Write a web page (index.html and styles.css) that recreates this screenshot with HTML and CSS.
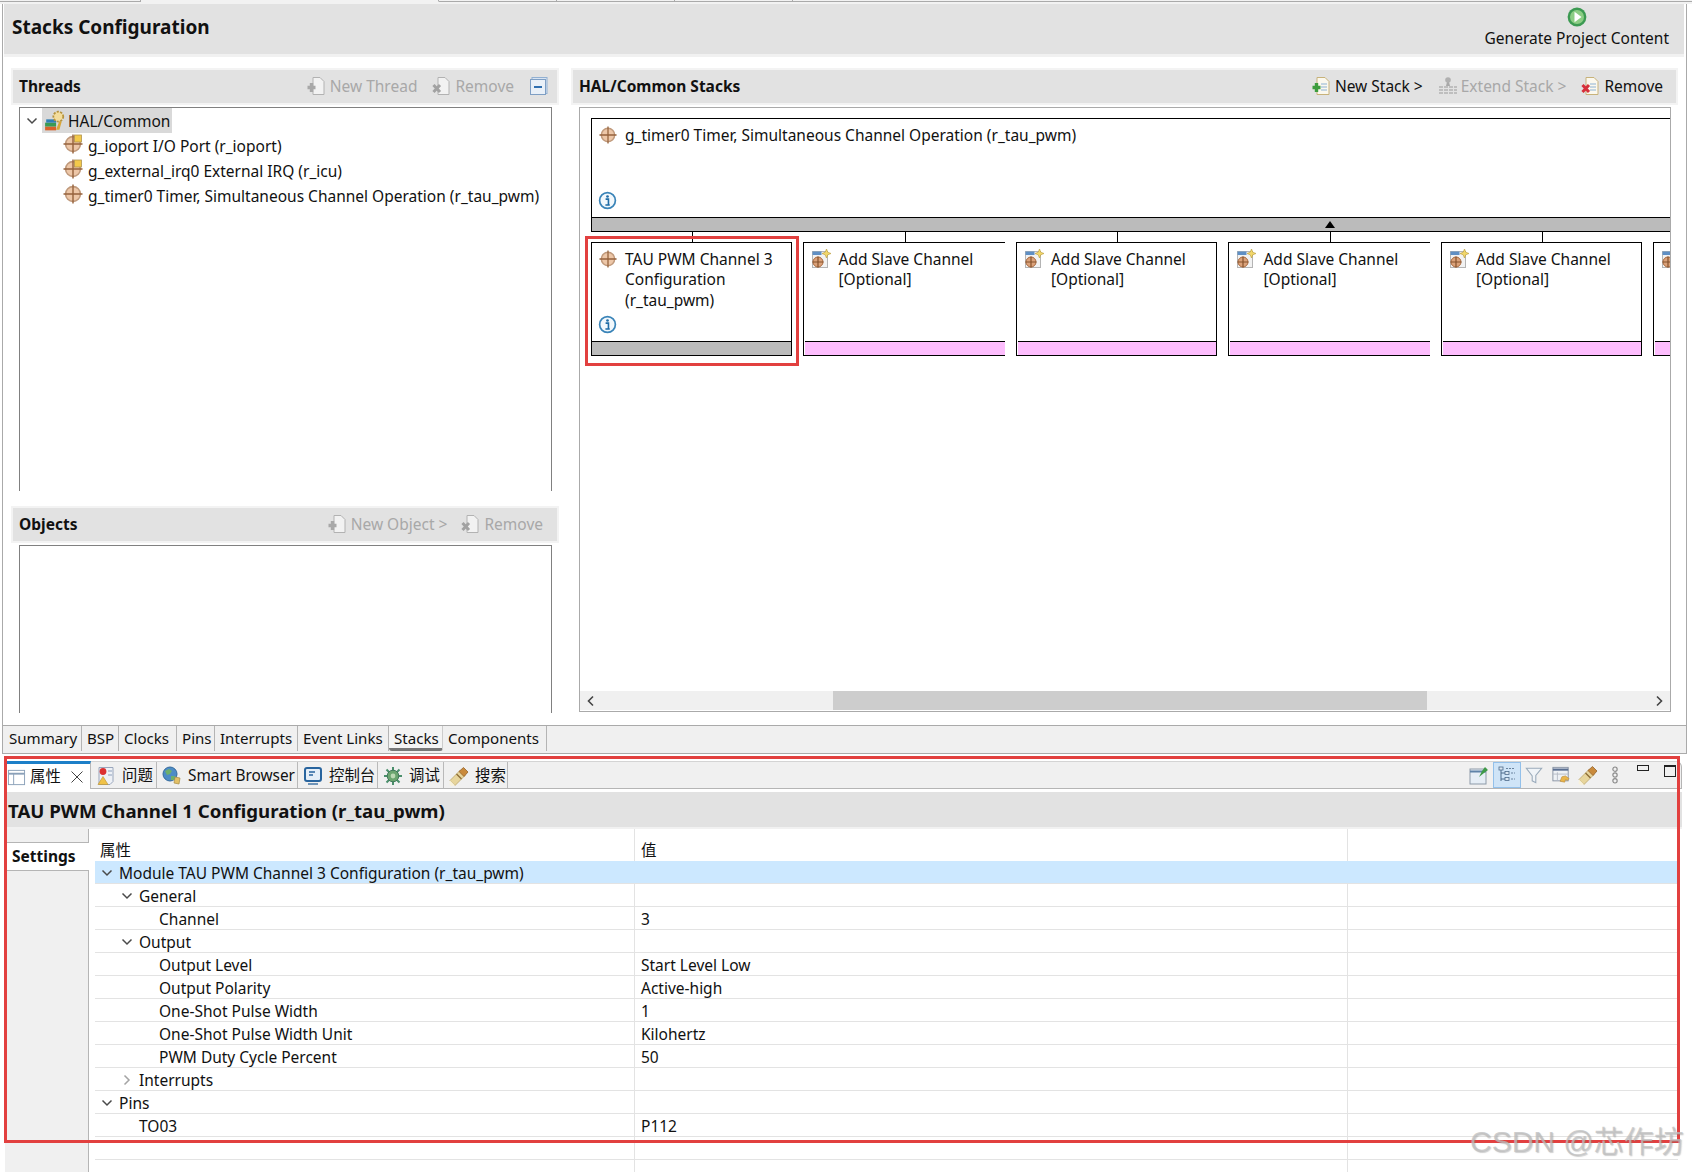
FILE: index.html
```html
<!DOCTYPE html>
<html lang="en">
<head>
<meta charset="utf-8">
<title>Stacks Configuration</title>
<link rel="stylesheet" href="styles.css">
</head>
<body>
<svg class="defs" aria-hidden="true">
  <symbol id="cross" viewBox="0 0 20 20">
    <circle cx="10" cy="10" r="7.4" fill="#edc7a8" stroke="#c09a7c" stroke-width="1.600"/>
    <path d="M10 0.500v19M0.500 10h19" stroke="#95623c" stroke-width="1.400"/>
  </symbol>
  <symbol id="crossy" viewBox="0 0 20 20">
    <use href="#cross"/>
    <rect x="11.500" y="1" width="7" height="7" fill="#f3c94a" stroke="#b09450" stroke-width=".8"/>
  </symbol>
  <symbol id="hal" viewBox="0 0 20 20">
    <rect x="1" y="15" width="10" height="3.500" fill="#d8622a"/>
    <rect x="1" y="11.500" width="10" height="3.500" fill="#3a9a54"/>
    <rect x="2" y="8.500" width="9" height="3" fill="#2f7fb5"/>
    <circle cx="13" cy="6" r="4.500" fill="#f3dd9c" stroke="#b5933e" stroke-width="1.600" stroke-dasharray="2 1.200"/>
    <path d="M11 18l3-8 2 1-2 7z" fill="#d9a638"/>
  </symbol>
  <symbol id="doc" viewBox="0 0 20 20">
    <path d="M5 1.500h8l4 4v13H5z" fill="#fbf8ee" stroke="#c7b27a"/>
    <path d="M9 8h6M9 11h6M9 14h6" stroke="#8db2d4"/>
  </symbol>
  <symbol id="doc-add" viewBox="0 0 20 20">
    <use href="#doc"/>
    <path d="M4.500 7v9M0.500 11.500h8" stroke="#3d9c3d" stroke-width="3.400"/>
  </symbol>
  <symbol id="doc-del" viewBox="0 0 20 20">
    <use href="#doc"/>
    <path d="M1.500 9l6.500 7M8 9l-6.500 7" stroke="#d6303a" stroke-width="3"/>
  </symbol>
  <symbol id="off-add" viewBox="0 0 20 20">
    <path d="M6 1.500h7l4 4v13H6z" fill="#f2f2f2" stroke="#b2b2b2"/>
    <path d="M4.500 7v9M0.500 11.500h8" stroke="#a8a8a8" stroke-width="3.400"/>
  </symbol>
  <symbol id="off-del" viewBox="0 0 20 20">
    <path d="M6 1.500h7l4 4v13H6z" fill="#f2f2f2" stroke="#b2b2b2"/>
    <path d="M1.500 9l6.500 7M8 9l-6.500 7" stroke="#a2a2a2" stroke-width="3"/>
  </symbol>
  <symbol id="collapse" viewBox="0 0 20 20">
    <rect x="3" y="1.500" width="15" height="16" fill="#d8e4f2" stroke="#92b0d2"/>
    <rect x="1.500" y="3.500" width="15" height="15" fill="#e9f0f8" stroke="#7f9fc4"/>
    <path d="M5 11h8" stroke="#2f6fb0" stroke-width="2"/>
  </symbol>
  <symbol id="info" viewBox="0 0 20 20">
    <circle cx="10" cy="10" r="8.300" fill="#f2f8fc" stroke="#3a84b8" stroke-width="1.800"/>
    <circle cx="10" cy="5.800" r="1.400" fill="#1f6ca6"/>
    <path d="M8 8.600h3v6M7.800 14.800h4.600" fill="none" stroke="#1f6ca6" stroke-width="1.700"/>
  </symbol>
  <symbol id="gen" viewBox="0 0 20 20">
    <circle cx="10" cy="10" r="9.400" fill="#3c9a52"/>
    <circle cx="10" cy="10" r="7" fill="#8ccd84"/>
    <path d="M7.500 4.800l7 5.200-7 5.200z" fill="#fff"/>
  </symbol>
  <symbol id="extend" viewBox="0 0 20 20">
    <path d="M1 11h18M1 14h18M1 17h18" stroke="#b3b3b3" stroke-width="1.300" stroke-dasharray="4 1"/>
    <path d="M8 10l1-4h2l1 4z" fill="#a8a8a8"/>
    <circle cx="10" cy="4" r="2.800" fill="#b0b0b0"/>
  </symbol>
  <symbol id="slave" viewBox="0 0 20 20">
    <rect x="1.500" y="2.500" width="15" height="16" fill="#f2f2f2" stroke="#b4b4b4"/>
    <rect x="1.500" y="2.500" width="9" height="3.500" fill="#5f8fc4"/>
    <circle cx="7" cy="13" r="5" fill="#dba27a" stroke="#a8683c"/>
    <path d="M7 7.500v11M1.500 13h11" stroke="#85522c" stroke-width="1.200"/>
    <path d="M15.500 0l1.300 3.200L20 4.500l-3.200 1.300L15.500 9l-1.300-3.200L11 4.500l3.200-1.300z" fill="#f2d76a" stroke="#b99b38" stroke-width=".6"/>
  </symbol>
  <symbol id="t-prop" viewBox="0 0 20 20">
    <rect x="1.500" y="2.500" width="17" height="15" fill="#fff" stroke="#8aa0b8"/>
    <path d="M1.500 6h17" stroke="#8aa0b8" stroke-width="2"/>
    <path d="M7 6v11.500" stroke="#8aa0b8"/>
  </symbol>
  <symbol id="t-prob" viewBox="0 0 20 20">
    <path d="M3 1.500h14v14l-3 3H3z" fill="#eef1f6" stroke="#9aa6bc"/>
    <circle cx="7" cy="5.500" r="3.400" fill="#dc3030"/>
    <path d="M7 10.500l5 8H2z" fill="#f0c248" stroke="#b99030" stroke-width=".6"/>
    <path d="M12 5h4M12 9h4" stroke="#8ea0bc"/>
  </symbol>
  <symbol id="t-globe" viewBox="0 0 20 20">
    <circle cx="8" cy="8" r="7" fill="#4d8cc6" stroke="#336a9c"/>
    <path d="M3 5l4-2 3 2-2 3-3 1zM9 10l4 0-1 4-3 0z" fill="#6fb06a"/>
    <path d="M13 11l5 1-1 6-5-1z" fill="#e3c067" stroke="#a68b42" stroke-width=".7"/>
  </symbol>
  <symbol id="t-mon" viewBox="0 0 20 20">
    <rect x="2" y="2" width="16" height="13" rx="2" fill="#e4eef8" stroke="#28649e" stroke-width="2"/>
    <path d="M6 6h6M6 9h4" stroke="#28649e" stroke-width="1.300"/>
    <path d="M5 18h10" stroke="#6f94b8" stroke-width="2"/>
  </symbol>
  <symbol id="t-bug" viewBox="0 0 20 20">
    <path d="M10 1v18M1 10h18M3.500 3.500l13 13M16.500 3.500l-13 13" stroke="#4b8f6c" stroke-width="2"/>
    <circle cx="10" cy="10" r="5.800" fill="#6ba56f" stroke="#41795a"/>
    <circle cx="10" cy="10" r="2.400" fill="#bcd9b4"/>
  </symbol>
  <symbol id="t-torch" viewBox="0 0 20 20">
    <path d="M1 14.500L11 4.500l5 5L6 19.500z" fill="#e7d59c" stroke="#bba567" stroke-width=".8"/>
    <path d="M10 5.500l5 5 4-4.500-4.500-4.500z" fill="#c98a3c" stroke="#94622a" stroke-width=".8"/>
    <path d="M1 14.500l5 5-4 .5-1.500-1.500z" fill="#f8f2dc"/>
    <path d="M7.500 8l5 5" stroke="#8a6a34" stroke-width="1.300"/>
  </symbol>
  <symbol id="t-x" viewBox="0 0 14 14"><path d="M1.500 1.500l11 11M12.500 1.500l-11 11" stroke="#444" stroke-width="1" fill="none"/></symbol>
  <symbol id="b-pin" viewBox="0 0 20 20">
    <rect x="1" y="4" width="16" height="15" fill="#e6eef6" stroke="#8d9aa8"/>
    <path d="M1 6.500h16" stroke="#5f83a8" stroke-width="2"/>
    <path d="M10 12l3-6 3-4 3 3-4 3-5 4z" fill="#3f9a48"/>
  </symbol>
  <symbol id="b-tree" viewBox="0 0 20 20">
    <path d="M4 3v13M4 8h4M4 14h4" stroke="#4d6a8a" fill="none"/>
    <rect x="2" y="2" width="4" height="3" fill="#dbe7f2" stroke="#4d6a8a" stroke-width=".8"/>
    <rect x="8" y="6.500" width="4" height="3" fill="#dbe7f2" stroke="#4d6a8a" stroke-width=".8"/>
    <rect x="8" y="12.500" width="4" height="3" fill="#dbe7f2" stroke="#4d6a8a" stroke-width=".8"/>
    <path d="M9 3.500h9M14 8h4M14 14h4" stroke="#68829e" stroke-dasharray="2 1"/>
  </symbol>
  <symbol id="b-filter" viewBox="0 0 20 20">
    <path d="M1.500 2.500h17L12 10.500v8l-4-2v-5.500z" fill="#f0f4f8" stroke="#9aabbb" stroke-width="1.200"/>
  </symbol>
  <symbol id="b-win" viewBox="0 0 20 20">
    <rect x="1" y="1.500" width="17" height="15" fill="#eef1f5" stroke="#8590a0"/>
    <path d="M1 4h17" stroke="#5a6e90" stroke-width="2.400"/>
    <path d="M6 7v9M1 9h17" stroke="#b3bac4"/>
    <path d="M9 17l2-5 4-1 4 3-2 2-2-1-1 3z" fill="#eab54a" stroke="#b2822c" stroke-width=".6"/>
  </symbol>
  <symbol id="b-dots" viewBox="0 0 8 20">
    <circle cx="4" cy="3.500" r="2.400" fill="none" stroke="#8b8b8b" stroke-width="1.300"/>
    <circle cx="4" cy="10" r="2.400" fill="none" stroke="#8b8b8b" stroke-width="1.300"/>
    <circle cx="4" cy="16.500" r="2.400" fill="none" stroke="#8b8b8b" stroke-width="1.300"/>
  </symbol>
  <symbol id="down" viewBox="0 0 12 12"><path d="M1.500 3.500L6 8l4.500-4.500" fill="none" stroke="#4a4a4a" stroke-width="1.500"/></symbol>
  <symbol id="right" viewBox="0 0 12 12"><path d="M3.500 1.500L8 6l-4.500 4.500" fill="none" stroke="#a4a4a4" stroke-width="1.500"/></symbol>
  <symbol id="sb-l" viewBox="0 0 12 12"><path d="M8 1.500L3.500 6 8 10.500" fill="none" stroke="#444" stroke-width="1.600"/></symbol>
  <symbol id="sb-r" viewBox="0 0 12 12"><path d="M4 1.500L8.500 6 4 10.500" fill="none" stroke="#444" stroke-width="1.600"/></symbol>
</svg>

<div class="strip">
  <span class="strip-seg strip-a"></span>
  <span class="strip-seg strip-active"></span>
  <span class="strip-seg strip-b"></span>
  <span class="strip-seg strip-b"></span>
  <span class="strip-seg strip-b"></span>
  <span class="strip-seg strip-rest"></span>
</div>

<section class="editor">
  <header class="band">
    <h1 class="band-title">Stacks Configuration</h1>
    <div class="gen">
      <svg class="ic-gen"><use href="#gen"/></svg>
      <span>Generate Project Content</span>
    </div>
  </header>

  <div class="main">
    <div class="left">
      <div class="pane-head">
        <h2 class="pane-title">Threads</h2>
        <div class="tools tools-threads">
          <span class="tool off"><svg class="ic"><use href="#off-add"/></svg>New Thread</span>
          <span class="tool off"><svg class="ic"><use href="#off-del"/></svg>Remove</span>
          <svg class="ic"><use href="#collapse"/></svg>
        </div>
      </div>
      <div class="tree">
        <div class="tree-row tree-root">
          <svg class="chev-root"><use href="#down"/></svg>
          <span class="tree-sel"><svg class="ic-hal"><use href="#hal"/></svg>HAL/Common</span>
        </div>
        <div class="tree-row tree-leaf"><svg class="ic-tree"><use href="#crossy"/></svg>g_ioport I/O Port (r_ioport)</div>
        <div class="tree-row tree-leaf"><svg class="ic-tree"><use href="#crossy"/></svg>g_external_irq0 External IRQ (r_icu)</div>
        <div class="tree-row tree-leaf"><svg class="ic-tree"><use href="#cross"/></svg>g_timer0 Timer, Simultaneous Channel Operation (r_tau_pwm)</div>
      </div>
      <div class="pane-head pane-objects">
        <h2 class="pane-title">Objects</h2>
        <div class="tools tools-objects">
          <span class="tool off"><svg class="ic"><use href="#off-add"/></svg>New Object &gt;</span>
          <span class="tool off"><svg class="ic"><use href="#off-del"/></svg>Remove</span>
        </div>
      </div>
      <div class="objects-box"></div>
    </div>

    <div class="right">
      <div class="pane-head">
        <h2 class="pane-title pane-title-r">HAL/Common Stacks</h2>
        <div class="tools tools-stacks">
          <span class="tool"><svg class="ic"><use href="#doc-add"/></svg>New Stack &gt;</span>
          <span class="tool off"><svg class="ic"><use href="#extend"/></svg>Extend Stack &gt;</span>
          <span class="tool"><svg class="ic"><use href="#doc-del"/></svg>Remove</span>
        </div>
      </div>
      <div class="diagram">
        <div class="canvas">
          <div class="top-card">
            <div class="top-body">
              <div class="card-line"><svg class="ic-card"><use href="#cross"/></svg><span>g_timer0 Timer, Simultaneous Channel Operation (r_tau_pwm)</span></div>
              <svg class="ic-info"><use href="#info"/></svg>
            </div>
            <div class="top-bar"><span class="tri"></span></div>
          </div>
          <div class="cards">
            <div class="card">
              <div class="card-body">
                <div class="card-line"><svg class="ic-card"><use href="#cross"/></svg><span>TAU PWM Channel 3<br>Configuration<br>(r_tau_pwm)</span></div>
                <svg class="ic-info ic-info-s"><use href="#info"/></svg>
              </div>
              <div class="card-bar"></div>
            </div>
            <div class="card card-add card-open">
              <div class="card-body"><div class="card-line"><svg class="ic-card"><use href="#slave"/></svg><span>Add Slave Channel<br>[Optional]</span></div></div>
              <div class="card-bar"></div>
            </div>
            <div class="card card-add">
              <div class="card-body"><div class="card-line"><svg class="ic-card"><use href="#slave"/></svg><span>Add Slave Channel<br>[Optional]</span></div></div>
              <div class="card-bar"></div>
            </div>
            <div class="card card-add card-open">
              <div class="card-body"><div class="card-line"><svg class="ic-card"><use href="#slave"/></svg><span>Add Slave Channel<br>[Optional]</span></div></div>
              <div class="card-bar"></div>
            </div>
            <div class="card card-add">
              <div class="card-body"><div class="card-line"><svg class="ic-card"><use href="#slave"/></svg><span>Add Slave Channel<br>[Optional]</span></div></div>
              <div class="card-bar"></div>
            </div>
            <div class="card card-add card-cut">
              <div class="card-body"><div class="card-line"><svg class="ic-card"><use href="#slave"/></svg></div></div>
              <div class="card-bar"></div>
            </div>
          </div>
        </div>
        <div class="hscroll">
          <svg class="sb-arrow"><use href="#sb-l"/></svg>
          <div class="sb-track"><div class="sb-thumb"></div></div>
          <svg class="sb-arrow"><use href="#sb-r"/></svg>
        </div>
      </div>
    </div>
  </div>

  <nav class="editor-tabs">
    <span class="etab">Summary</span>
    <span class="etab">BSP</span>
    <span class="etab">Clocks</span>
    <span class="etab">Pins</span>
    <span class="etab">Interrupts</span>
    <span class="etab">Event Links</span>
    <span class="etab etab-on">Stacks</span>
    <span class="etab">Components</span>
  </nav>
</section>

<section class="panel">
  <div class="panel-tabs">
    <span class="ptab ptab-on"><svg class="ic-tab ic-tab-prop"><use href="#t-prop"/></svg>属性<svg class="ptab-x"><use href="#t-x"/></svg></span>
    <span class="ptab"><svg class="ic-tab"><use href="#t-prob"/></svg>问题</span>
    <span class="ptab"><svg class="ic-tab"><use href="#t-globe"/></svg>Smart Browser</span>
    <span class="ptab"><svg class="ic-tab"><use href="#t-mon"/></svg>控制台</span>
    <span class="ptab"><svg class="ic-tab"><use href="#t-bug"/></svg>调试</span>
    <span class="ptab"><svg class="ic-tab"><use href="#t-torch"/></svg>搜索</span>
    <div class="panel-tools">
      <svg class="ic-b"><use href="#b-pin"/></svg>
      <span class="b-on"><svg class="ic-b"><use href="#b-tree"/></svg></span>
      <svg class="ic-b ic-filter"><use href="#b-filter"/></svg>
      <svg class="ic-b ic-win"><use href="#b-win"/></svg>
      <svg class="ic-b ic-torch"><use href="#t-torch"/></svg>
      <svg class="ic-dots"><use href="#b-dots"/></svg>
      <span class="win-min"></span>
      <span class="win-max"></span>
    </div>
  </div>
  <div class="panel-band">TAU PWM Channel 1 Configuration (r_tau_pwm)</div>
  <div class="panel-body">
    <aside class="side">
      <div class="side-top"></div>
      <div class="side-tab">Settings</div>
    </aside>
    <div class="table">
      <div class="row row-head"><span class="c1">属性</span><span class="c2">值</span><span class="c3"></span></div>
      <div class="row row-sel"><span class="c1 l1"><svg class="chev"><use href="#down"/></svg>Module TAU PWM Channel 3 Configuration (r_tau_pwm)</span><span class="c2"></span><span class="c3"></span></div>
      <div class="row"><span class="c1 l2"><svg class="chev"><use href="#down"/></svg>General</span><span class="c2"></span><span class="c3"></span></div>
      <div class="row"><span class="c1 l3">Channel</span><span class="c2">3</span><span class="c3"></span></div>
      <div class="row"><span class="c1 l2"><svg class="chev"><use href="#down"/></svg>Output</span><span class="c2"></span><span class="c3"></span></div>
      <div class="row"><span class="c1 l3">Output Level</span><span class="c2">Start Level Low</span><span class="c3"></span></div>
      <div class="row"><span class="c1 l3">Output Polarity</span><span class="c2">Active-high</span><span class="c3"></span></div>
      <div class="row"><span class="c1 l3">One-Shot Pulse Width</span><span class="c2">1</span><span class="c3"></span></div>
      <div class="row"><span class="c1 l3">One-Shot Pulse Width Unit</span><span class="c2">Kilohertz</span><span class="c3"></span></div>
      <div class="row"><span class="c1 l3">PWM Duty Cycle Percent</span><span class="c2">50</span><span class="c3"></span></div>
      <div class="row"><span class="c1 l2"><svg class="chev"><use href="#right"/></svg>Interrupts</span><span class="c2"></span><span class="c3"></span></div>
      <div class="row"><span class="c1 l1"><svg class="chev"><use href="#down"/></svg>Pins</span><span class="c2"></span><span class="c3"></span></div>
      <div class="row"><span class="c1 l4">TO03</span><span class="c2">P112</span><span class="c3"></span></div>
      <div class="row"><span class="c1"></span><span class="c2"></span><span class="c3"></span></div>
      <div class="row"><span class="c1"></span><span class="c2"></span><span class="c3"></span></div>
    </div>
  </div>
</section>

<div class="mark mark-card"></div>
<div class="mark mark-panel"></div>
<div class="watermark">CSDN @芯作坊</div>
</body>
</html>
```
FILE: styles.css
```css
* { box-sizing: border-box; }
html, body { margin: 0; padding: 0; }
body {
  width: 1692px; height: 1172px; overflow: hidden; position: relative;
  background: #fff; color: #111;
  font: 15.5px/20px "Noto Sans", "Noto Sans CJK SC", sans-serif;
}
.defs { display: block; width: 0; height: 0; position: absolute; }
svg { display: block; flex: none; }
h1, h2 { margin: 0; }

/* top strip */
.strip { display: flex; height: 4px; background: #f2f2f2; }
.strip-seg { display: block; height: 2px; border-bottom: 1px solid #aaa; border-right: 1px solid #aaa; }
.strip-a { width: 141px; }
.strip-active { width: 298px; border-bottom-color: #f2f2f2; }
.strip-b { width: 118px; }
.strip-rest { flex: 1; border-right: 0; }

/* editor */
.editor {
  margin-left: 2px; width: 1685px; height: 750px;
  border-left: 1px solid #aaa; border-right: 1px solid #aaa; border-bottom: 1px solid #aaa;
  display: flex; flex-direction: column;
}
.band {
  margin: 0 2px 0 1px; height: 53px; flex: none; background: #e2e2e2;
  border-bottom: 3px solid #f1f1f1;
  display: flex; justify-content: space-between; padding: 0 15px 0 8px;
}
.band-title { font-size: 19px; font-weight: 700; line-height: 46px; }
.gen { display: flex; flex-direction: column; align-items: center; padding-top: 3px; }
.ic-gen { width: 20px; height: 20px; margin-bottom: 1px; }

.main { display: flex; flex: 1; min-height: 0; padding-left: 10px; gap: 16px; }
.left { width: 544px; flex: none; padding-top: 13px; }
.right { width: 1103px; flex: none; padding-top: 13px; }

.pane-head {
  height: 33px; background: #e2e2e2; box-shadow: 0 0 0 2px #f3f3f3;
  display: flex; justify-content: space-between; align-items: center; padding-bottom: 2px;
}
.pane-title { font-size: 15.5px; font-weight: 700; padding-left: 6px; }
.pane-objects { margin-top: 17px; }
.tools { display: flex; align-items: center; }
.tool { display: flex; align-items: center; gap: 3px; }
.off { color: #a8a8a8; }
.ic { width: 20px; height: 20px; }
.tools-threads { gap: 15px; padding-right: 8px; }
.tools-objects { gap: 14px; padding-right: 14px; }
.tools-stacks { gap: 15px; padding-right: 13px; }

.tree {
  margin: 4px 5px 0 6px; height: 384px;
  border: 1px solid #808080; border-bottom: 0;
}
.tree-row { height: 25px; display: flex; align-items: center; }
.tree-root { padding-left: 6px; }
.chev-root { width: 12px; height: 12px; margin-right: 4px; }
.tree-sel { display: flex; align-items: center; height: 25px; background: #d9d9d9; padding-right: 2px; padding-left: 2px; }
.ic-hal { width: 22px; height: 22px; margin-right: 2px; }
.tree-leaf { padding: 0 0 0 43px; }
.ic-tree { width: 20px; height: 20px; margin-right: 5px; margin-top: -3px; }

.objects-box {
  margin: 4px 5px 0 6px; height: 168px;
  border: 1px solid #808080; border-bottom: 0;
}

/* diagram */
.diagram {
  margin: 4px 5px 0 6px; height: 605px; border: 1px solid #aaa;
  display: flex; flex-direction: column;
}
.canvas { flex: 1; min-height: 0; padding: 10px 0 0 11px; overflow: hidden; }
.top-card {
  height: 114px; border: 1px solid #000; border-right: 0;
  display: flex; flex-direction: column;
}
.top-body { flex: 1; padding: 7px 0 0 7px; display: flex; flex-direction: column; justify-content: space-between; }
.card-line { display: flex; gap: 8px; line-height: 20.4px; }
.card-line span { margin-top: -1px; }
.ic-card { width: 18px; height: 18px; margin-top: 0; }
.ic-info { width: 19px; height: 19px; margin: 0 0 7px -1px; }
.ic-info-s { margin-bottom: 7px; }
.top-bar {
  height: 14px; background: #bbb; border-top: 1px solid #000;
  padding: 3px 0 0 733px;
}
.tri {
  display: block; width: 0; height: 0;
  border-left: 5px solid transparent; border-right: 5px solid transparent;
  border-bottom: 7px solid #000;
}
.cards { display: flex; gap: 11.2px; margin-top: 10px; }
.card {
  position: relative; flex: none; width: 201.3px; height: 114px;
  border: 1px solid #000; display: flex; flex-direction: column;
}
.card::before {
  content: ""; position: absolute; left: 50%; top: -11px; width: 1px; height: 11px; background: #000;
}
.card-body { flex: 1; padding: 7px 0 0 7px; display: flex; flex-direction: column; justify-content: space-between; }
.card-add .ic-card { width: 20px; height: 20px; margin-top: -1px; }
.card-add .card-line { gap: 7px; }
.card-bar { height: 14px; background: #bbb; border-top: 1px solid #000; }
.card-add .card-bar { background: #fdbdfd; margin-left: 1px; }
.card-open { border-right: 0; }
.card-cut { width: 17px; border-right: 0; overflow: hidden; }
.card-cut::before { display: none; }

.hscroll { height: 19px; margin-bottom: 1px; background: #f0f0f0; display: flex; align-items: center; flex: none; }
.sb-arrow { width: 12px; height: 12px; margin: 0 5px; }
.sb-track { flex: 1; height: 19px; padding-left: 231px; }
.sb-thumb { width: 594px; height: 19px; background: #cdcdcd; }

/* editor tabs */
.editor-tabs {
  margin: auto 0 0 0; height: 28px; background: #f0f0f0; border-top: 1px solid #aaa; flex: none; font-size: 15.1px;
  display: grid; grid-template-columns: 78px 37px 58px 38px 83px 91px 54px 104px; padding-left: 1px;
}
.etab { border-right: 1px solid #b4b4b4; padding-left: 5px; height: 25px; line-height: 24px; white-space: nowrap; }
.etab-on { background: #f4f4f4; border-bottom: 3px solid #777; border-radius: 0 0 3px 3px; border-right-color: #ccc; }

/* lower panel */
.panel { padding: 7px 8px 0 4px; height: 418px; display: flex; flex-direction: column; }
.panel-tabs {
  height: 28px; flex: none; display: grid;
  grid-template-columns: 87px 66px 141px 80px 66px 64px 1fr;
  background: #f0f0f0; border-bottom: 1px solid #b5b5b5; border-top: 1px solid #d4d4d4;
  border-right: 1px solid #b5b5b5; border-radius: 0 6px 0 0; margin-right: 2px;
}
.ptab {
  display: flex; align-items: center; gap: 6px; padding: 1px 0 0 5px;
  border-right: 1px solid #b9b9b9; white-space: nowrap; font-size: 15.4px;
}
.ptab-on { background: #fff; border-top: 3px solid #1c7fc8; margin-top: -1px; margin-bottom: -1px; gap: 4px; padding-left: 3px; }
.ptab-x { width: 14px; height: 14px; margin-left: 5px; }
.ic-tab { width: 20px; height: 20px; }
.ic-tab-prop { width: 19px; height: 19px; }
.panel-tools { display: flex; align-items: center; justify-content: flex-end; padding-right: 5px; }
.ic-b { width: 20px; height: 20px; }
.b-on { display: block; background: #cfe4f7; border: 1px solid #93c0ea; padding: 2px 3px; height: 26px; margin-left: 4px; }
.ic-filter { width: 18px; margin-left: 4px; }
.ic-win { width: 18px; margin-left: 9px; }
.ic-torch { margin-left: 8px; }
.ic-dots { width: 8px; height: 18px; margin-left: 13px; }
.win-min { width: 12px; height: 6px; border: 1.500px solid #222; margin: -14px 0 0 18px; }
.win-max { width: 12px; height: 12px; border: 1.500px solid #222; border-top-width: 2.500px; margin: -8px 0 0 15px; }

.panel-band {
  height: 37px; flex: none; margin-top: 3px; margin-right: 2px; background: #e2e2e2;
  border-bottom: 2px solid #f1f1f1; font-size: 18.65px; font-weight: 700; line-height: 37px; padding-left: 4px;
}
.panel-body { flex: 1; min-height: 0; display: flex; }
.side { width: 84px; flex: none; background: #f0f0f0; border-right: 1px solid #b5b5b5; margin-left: 1px; }
.side-top { height: 14px; border-bottom: 1px solid #b5b5b5; }
.side-tab {
  height: 28px; background: #fff; margin-right: -1px; border-bottom: 1px solid #b5b5b5;
  font-weight: 700; padding-left: 7px; line-height: 26px;
}

.table { width: 1583px; margin-left: 6px; flex: none; overflow: hidden; }
.row { display: grid; grid-template-columns: 540px 713px 330px; height: 23px; border-bottom: 1px solid #e3e3e3; line-height: 22px; }
.row > span { display: flex; align-items: center; white-space: nowrap; min-width: 0; height: 22px; padding-top: 2px; }
.c1, .c2 { border-right: 1px solid #e3e3e3; }
.c2 { padding-left: 6px; }
.row-head { height: 32px; border-bottom: 0; }
.row > span.c1:empty, .row > span.c2:empty { padding-top: 0; }
.row-head > span { height: 32px; padding-top: 9px; }
.row-head .c1 { padding-left: 5px; }
.row-sel { background: #cce8ff; }
.row-sel > span { border-right-color: transparent; }
.chev { width: 12px; height: 12px; margin-right: 6px; }
.l1 { padding-left: 6px; }
.l2 { padding-left: 26px; }
.l3 { padding-left: 64px; }
.l4 { padding-left: 44px; }

/* annotation overlays */
.mark { position: absolute; border: 3px solid #e2403f; pointer-events: none; }
.mark-card { left: 585px; top: 236px; width: 214px; height: 130px; }
.mark-panel { left: 4px; top: 756px; width: 1676px; height: 387px; }
.watermark {
  position: absolute; left: 1470px; top: 1124px; white-space: nowrap;
  font: 30px/36px "Liberation Sans", "Noto Sans CJK SC", sans-serif;
  color: rgba(190,190,190,.75); text-shadow: 1px 1px 1px rgba(120,120,120,.35);
}
```
